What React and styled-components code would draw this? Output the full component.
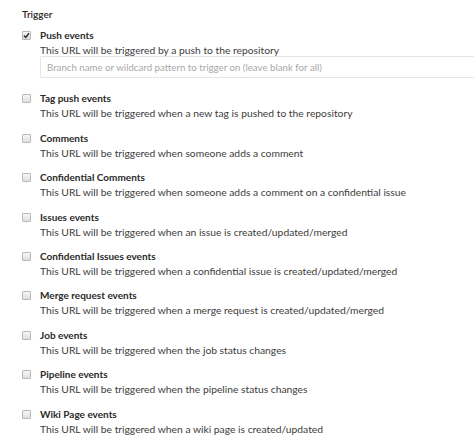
import styled, { createGlobalStyle } from 'styled-components';

const GlobalStyle = createGlobalStyle`
  body {
    margin: 0;
    background: #ffffff;
    font-family: Lato, "Open Sans", "Liberation Sans", sans-serif;
    color: #2e2e2e;
  }
`;

const triggers = [
  { label: 'Push events', text: 'This URL will be triggered by a push to the repository', checked: true, branch: true },
  { label: 'Tag push events', text: 'This URL will be triggered when a new tag is pushed to the repository' },
  { label: 'Comments', text: 'This URL will be triggered when someone adds a comment' },
  { label: 'Confidential Comments', text: 'This URL will be triggered when someone adds a comment on a confidential issue' },
  { label: 'Issues events', text: 'This URL will be triggered when an issue is created/updated/merged' },
  { label: 'Confidential Issues events', text: 'This URL will be triggered when a confidential issue is created/updated/merged' },
  { label: 'Merge request events', text: 'This URL will be triggered when a merge request is created/updated/merged' },
  { label: 'Job events', text: 'This URL will be triggered when the job status changes' },
  { label: 'Pipeline events', text: 'This URL will be triggered when the pipeline status changes' },
  { label: 'Wiki Page events', text: 'This URL will be triggered when a wiki page is created/updated' },
];

function Checkbox({ checked }) {
  return (
    <Box>
      {checked && (
        <svg width="7" height="7" viewBox="0 0 7 7">
          <path d="M1 3.6 L2.8 5.4 L6 1.2" fill="none" stroke="#333" strokeWidth="1.5" />
        </svg>
      )}
    </Box>
  );
}

export default function App() {
  return (
    <Page>
      <GlobalStyle />
      <Title>Trigger</Title>
      <List>
        {triggers.map((t) => (
          <Item key={t.label}>
            <Checkbox checked={t.checked} />
            <Body>
              <Label>{t.label}</Label>
              <Help>{t.text}</Help>
              {t.branch && <BranchInput placeholder="Branch name or wildcard pattern to trigger on (leave blank for all)" />}
            </Body>
          </Item>
        ))}
      </List>
    </Page>
  );
}

const Page = styled.div`
  padding: 7px 0 0 22px;
  display: flex;
  flex-direction: column;
  gap: 6px;
`;

const Title = styled.div`
  font-size: 10px;
  font-weight: 600;
  line-height: 15px;
  color: #2a2a2a;
`;

const List = styled.div`
  display: flex;
  flex-direction: column;
  gap: 10.4px;
`;

const Item = styled.div`
  display: flex;
  align-items: flex-start;
`;

const Box = styled.span`
  box-sizing: border-box;
  width: 9px;
  height: 9px;
  margin-top: 3px;
  margin-right: 9px;
  flex: none;
  display: flex;
  align-items: center;
  justify-content: center;
  border: 1px solid #b9b9b9;
  border-radius: 1px;
  background: linear-gradient(#f6f6f6, #dedede);
`;

const Body = styled.div`
  flex: 1;
  display: flex;
  flex-direction: column;
`;

const Label = styled.div`
  font-size: 10px;
  font-weight: 700;
  line-height: 15px;
  color: #2a2a2a;
`;

const Help = styled.div`
  font-size: 10.3px;
  line-height: 14px;
  color: #3c3c3c;
`;

const BranchInput = styled.input`
  box-sizing: border-box;
  margin: -1px 0 3px;
  height: 22px;
  width: 100%;
  padding: 0 6px;
  border: 1px solid #e5e5e5;
  border-right: none;
  border-radius: 2px 0 0 2px;
  font-family: Lato, "Open Sans", "Liberation Sans", sans-serif;
  font-size: 9.7px;
  color: #333;
  outline: none;
  &::placeholder {
    color: #a8a8a8;
  }
`;
